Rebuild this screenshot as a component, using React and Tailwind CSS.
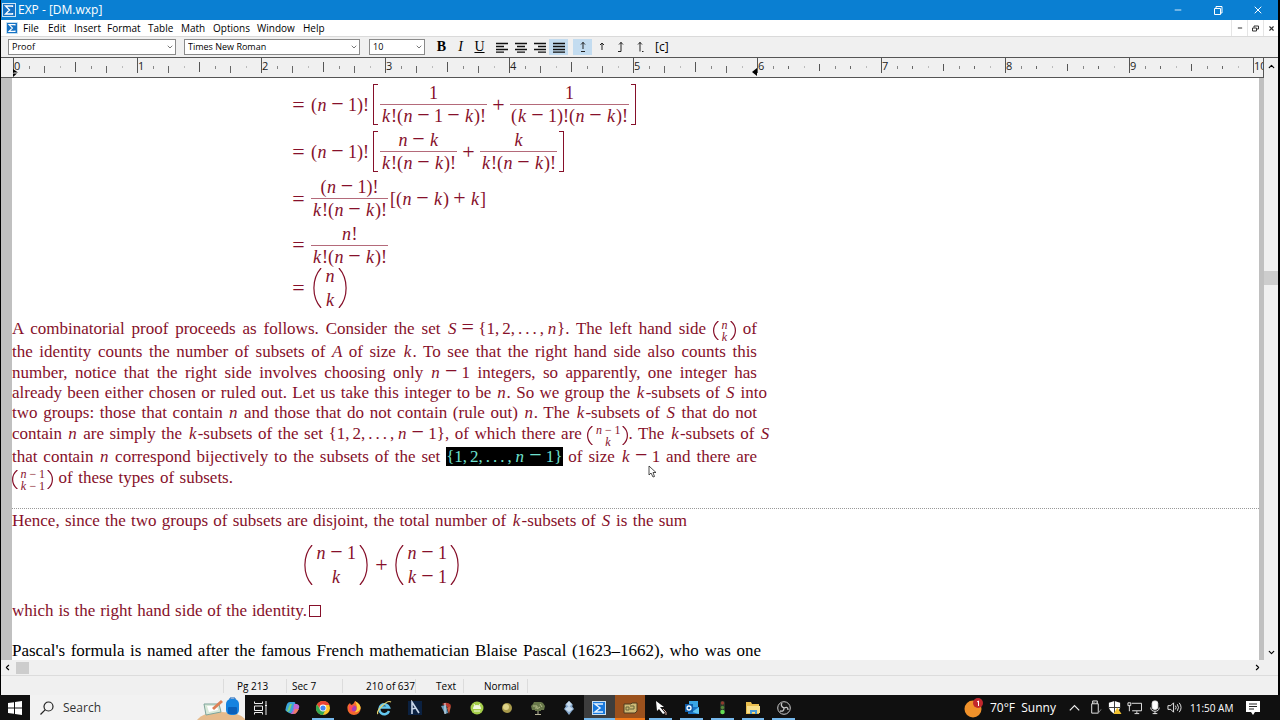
import React from 'react';
import { ChevronDown, ChevronLeft, ChevronRight, ChevronUp, Minus, X } from 'lucide-react';

const MENUS = [
  ['File', 'w-[25px]'],
  ['Edit', 'w-[26px]'],
  ['Insert', 'w-[33px]'],
  ['Format', 'w-[41px]'],
  ['Table', 'w-[33px]'],
  ['Math', 'w-[32px]'],
  ['Options', 'w-[44px]'],
  ['Window', 'w-[46px]'],
  ['Help', 'w-[30px]'],
];

const INCHES = [0, 1, 2, 3, 4, 5, 6, 7, 8, 9, 10];

const OPERATORS = { '-': '−', '+': '+', '=': '=' };

// Turns a short formula such as "(n-1)!" into spaced symbols
const Formula = ({ children, small }) => {
  const parts = children.match(/[a-zA-Z]|[-+=]|,|\.|[^a-zA-Z\-+=,.]+/g);
  return (
    <span className="inline-block whitespace-nowrap [text-align-last:center]">
      {parts.map((part, i) => {
        if (OPERATORS[part]) {
          return (
            <span
              key={i}
              className={small ? 'inline-block w-3 text-center' : 'mx-1 inline-block w-[13px] text-center text-[22px] leading-[10px]'}
            >
              {OPERATORS[part]}
            </span>
          );
        }
        if (/[a-zA-Z]/.test(part)) {
          return (
            <i key={i} className={small ? 'inline-block w-[7px] text-center' : 'inline-block w-[10px] text-center'}>
              {part}
            </i>
          );
        }
        if (part === ',' || part === '.') {
          return <span key={i} className="mr-[3px]">{part}</span>;
        }
        return <span key={i}>{part}</span>;
      })}
    </span>
  );
};

const Frac = ({ top, bottom }) => (
  <span className="inline-flex flex-col text-center leading-[22px]">
    <span><Formula>{top}</Formula></span>
    <span className="border-t border-[#b46a7a] px-px"><Formula>{bottom}</Formula></span>
  </span>
);

const Paren = ({ right, className }) => (
  <svg viewBox="0 0 10 40" preserveAspectRatio="none" className={className} fill="none" stroke="currentColor" aria-hidden="true">
    <path vectorEffect="non-scaling-stroke" strokeWidth="1.2" d={right ? 'M1 0Q9 8 9 20T1 40' : 'M9 0Q1 8 1 20T9 40'} />
  </svg>
);

const Binom = ({ top, bottom }) => (
  <span className="mx-[2px] inline-flex items-center">
    <Paren className="h-[40px] w-[9px]" />
    <span className="inline-flex flex-col px-[3px] text-center leading-[24px]">
      <Formula>{top}</Formula>
      <Formula>{bottom}</Formula>
    </span>
    <Paren right className="h-[40px] w-[9px]" />
  </span>
);

const SmallBinom = ({ top, bottom }) => (
  <span className="inline-flex h-[20px] items-center align-middle">
    <Paren className="h-[19px] w-[6px]" />
    <span className="inline-flex flex-col px-[2px] text-center text-[12px] leading-[12px]">
      <Formula small>{top}</Formula>
      <Formula small>{bottom}</Formula>
    </span>
    <Paren right className="h-[19px] w-[6px]" />
  </span>
);

const Bracketed = ({ children }) => (
  <span className="ml-1 inline-flex items-center">
    <span className="h-[41px] w-[5px] border-y border-l border-current" />
    <span className="inline-flex items-center px-[2px]">{children}</span>
    <span className="h-[41px] w-[5px] border-y border-r border-current" />
  </span>
);

const EqRow = ({ children, className = 'h-[47px]' }) => (
  <div className={`flex items-center ${className}`}>
    <span className="mr-[6px] w-[13px] text-center text-[22px] leading-[20px]">=</span>
    {children}
  </div>
);

const Plus = () => <span className="mx-[5px] w-[13px] text-center text-[22px] leading-[20px]">+</span>;

const Combo = ({ label, value, className }) => (
  <div className={`relative h-4 ${className}`}>
    <select
      aria-label={label}
      defaultValue={value}
      className="block h-4 w-full appearance-none border border-[#8a8a8a] bg-white pl-[3px] text-[9px] leading-[12px] text-black outline-none"
    >
      <option>{value}</option>
    </select>
    <ChevronDown className="pointer-events-none absolute right-[2px] top-[4px] h-2 w-2 text-[#333]" />
  </div>
);

const ToolButton = ({ label, active, children }) => (
  <button
    type="button"
    aria-label={label}
    className={`flex h-4 w-[19px] items-center justify-center ${active ? 'bg-[#c3dcf0]' : ''}`}
  >
    {children}
  </button>
);

const AlignIcon = ({ d }) => (
  <svg viewBox="0 0 12 11" className="h-[11px] w-3" stroke="#111" strokeWidth="1.3" aria-hidden="true">
    <path d={d} />
  </svg>
);

const ArrowIcon = ({ d }) => (
  <svg viewBox="0 0 8 12" className="h-3 w-2" fill="none" stroke="#222" strokeWidth="1" aria-hidden="true">
    <path d={d} />
  </svg>
);

const SigmaIcon = ({ className }) => (
  <svg viewBox="0 0 14 14" className={className} aria-hidden="true">
    <rect x="0.5" y="0.5" width="13" height="13" fill="#1672c4" stroke="#cfe6f5" />
    <path d="M10.5 4V3H3.5L7.5 7L3.5 11H10.5V10" fill="none" stroke="#fff" strokeWidth="1.3" />
  </svg>
);

const Ruler = () => (
  <div className="relative h-5 flex-1 overflow-hidden border-b border-r border-[#555] bg-[#f0f0f0] pl-3">
    <div className="flex">
      {INCHES.map((inch) => (
        <div key={inch} className="relative grid h-[18px] w-[124px] shrink-0 grid-cols-8 items-center">
          <span className="self-start border-l border-[#555] text-[11px] leading-[15px] text-[#222]">{inch}</span>
          <span className="h-[3px] border-l border-[#888]" />
          <span className={`${inch < 6 ? 'mt-1 h-[7px]' : 'h-[3px]'} border-l border-[#666]`} />
          <span className="h-[2px] border-l border-[#bbb]" />
          <span className={`${inch < 6 ? 'h-[10px]' : 'h-[7px]'} border-l border-[#555]`} />
          <span className="h-[3px] border-l border-[#888]" />
          <span className={`${inch < 6 ? 'mt-1 h-[7px]' : 'h-[3px]'} border-l border-[#666]`} />
          <span className="h-[2px] border-l border-[#bbb]" />
        </div>
      ))}
    </div>
    <svg viewBox="0 0 6 8" className="absolute left-3 top-[11px] h-2 w-[6px]" aria-hidden="true">
      <path d="M0 0L5 3.5H0ZM0 4.500H4L0 8Z" />
    </svg>
    <svg viewBox="0 0 5 8" className="absolute left-[751px] top-[10px] h-2 w-[5px]" aria-hidden="true">
      <path d="M5 0V8L0 4Z" />
    </svg>
  </div>
);

const Line = ({ className = 'h-[22px] w-[745px]', children }) => (
  <div className={`flex items-center whitespace-nowrap ${className}`}>
    <p className="w-full [text-align-last:justify]">{children}</p>
  </div>
);

const TaskIcon = ({ label, open, bg = '', children }) => (
  <button type="button" aria-label={label} className={`relative flex h-full items-center justify-center ${bg}`}>
    <svg viewBox="0 0 16 16" className="h-4 w-4" aria-hidden="true">{children}</svg>
    {open && <span className="absolute inset-x-1 bottom-0 h-[2px] bg-[#76b9ed]" />}
  </button>
);

const TrayIcon = ({ children, className = 'w-5' }) => (
  <span className={`flex justify-center ${className}`}>
    <svg viewBox="0 0 16 16" className="h-[15px] w-[15px]" fill="none" stroke="#eee" aria-hidden="true">{children}</svg>
  </span>
);

const Taskbar = () => (
  <footer className="flex h-[25px] shrink-0 items-center bg-[#101010] text-white">
    <button type="button" aria-label="Start" className="flex h-full w-[30px] items-center justify-center">
      <svg viewBox="0 0 14 14" className="h-[14px] w-[14px]" fill="#fff" aria-hidden="true">
        <path d="M0 2L6 1.200V6.500H0ZM7 1L14 0V6.500H7ZM0 7.500H6V12.800L0 12ZM7 7.500H14V14L7 13Z" />
      </svg>
    </button>
    <label className="flex h-full w-[215px] items-center bg-[#f2f2f2] pl-[10px]">
      <svg viewBox="0 0 14 14" className="h-[14px] w-[14px] shrink-0" fill="none" stroke="#222" strokeWidth="1.2" aria-hidden="true">
        <circle cx="8.500" cy="5.500" r="4.500" />
        <path d="M5.300 8.700L0.500 13.500" />
      </svg>
      <input
        aria-label="Search"
        placeholder="Search"
        className="ml-[9px] w-[120px] bg-transparent text-[12px] leading-[16px] outline-none placeholder:text-[#333]"
      />
      <svg viewBox="0 0 48 25" className="ml-auto h-[25px] w-[48px] shrink-0" aria-hidden="true">
        <path d="M0 25Q6 17 24 17T48 24V25Z" fill="#e6bb8c" />
        <path d="M7 9H22L24 17L9 20Z" fill="#d9e9d9" stroke="#7fa59b" />
        <path d="M10 11H20L21 15L12 17Z" fill="#fff" />
        <path d="M15 13L24 5L26 7L17 15Z" fill="#dd8055" />
        <path d="M33 5V3H38V5" fill="none" stroke="#1261b8" />
        <rect x="29" y="4" width="13" height="16" rx="5" fill="#1683e0" />
        <rect x="31" y="12" width="9" height="7" rx="1" fill="#0b60ba" />
      </svg>
    </label>
    <button type="button" aria-label="Task View" className="flex h-full w-[32px] items-center justify-center">
      <svg viewBox="0 0 16 14" className="h-[14px] w-4" fill="none" stroke="#eee" aria-hidden="true">
        <path d="M1.500 0.500V2.500H9.500V0.500M1.500 5H9.500V9.500H1.500ZM1.500 13.500V11.500H9.500V13.500M13 0V14M12 4.500H14" />
      </svg>
    </button>
    <nav aria-label="Apps" className="grid h-full w-[522px] grid-cols-[repeat(17,minmax(0,1fr))]">
      <TaskIcon label="Copilot">
        <path d="M6 2H10Q12 2 11 5L9 11Q8 14 5 13L2 11Q1 10 2 7L3 4Q4 2 6 2Z" fill="#3aa5dc" />
        <path d="M4 9L6 4H8L6 10Q5 12 3 12Z" fill="#7ccf78" />
        <path d="M10 4H13Q16 5 15 8L13 12Q12 14 9 14H6Q8 13 9 10Z" fill="#c069d0" />
        <path d="M11 9H15L13 12Q12 14 9 14Z" fill="#ee7d63" />
      </TaskIcon>
      <TaskIcon label="Chrome" open>
        <circle cx="8" cy="8" r="7" fill="#fbc52c" />
        <path d="M2 4.500A7 7 0 0 1 14.500 5H8L5 9Z" fill="#e84335" />
        <path d="M1.900 4.500A7 7 0 0 0 8 15L10.500 9.500L5 9Z" fill="#34a853" />
        <circle cx="8" cy="8" r="3.400" fill="#fff" />
        <circle cx="8" cy="8" r="2.600" fill="#4285f4" />
      </TaskIcon>
      <TaskIcon label="Firefox">
        <path d="M2 5L4 3L5 5Q8 4 9 1Q15 4 14.500 9A6.500 6 0 0 1 1.500 9Q1 7 2 5Z" fill="#f46a2c" />
        <path d="M9 1Q15 4 14.500 9Q12 13 9 12Q13 8 9 1Z" fill="#ffce3c" />
        <circle cx="7.500" cy="8.500" r="3" fill="#a63fb5" />
        <path d="M3 5L8 6L6 8Q5 11 9 12Q4 13 3 9Z" fill="#ff4b54" />
      </TaskIcon>
      <TaskIcon label="Internet Explorer">
        <path d="M13 11A5 5 0 1 1 13 7.500H4" fill="none" stroke="#63c7ef" strokeWidth="2.500" />
        <path d="M2 14Q0 12 6 6T15 2" fill="none" stroke="#e9d46b" strokeWidth="1.200" />
      </TaskIcon>
      <TaskIcon label="Aleks">
        <rect x="1" y="1" width="14" height="14" fill="#0b2141" />
        <path d="M5 14V2L12 13M5 9L9 8" fill="none" stroke="#c9d6e8" strokeWidth="1.600" />
      </TaskIcon>
      <TaskIcon label="Snagit">
        <path d="M4 4Q9 1 13 5L11 9L8 6Z" fill="#b8392e" />
        <path d="M3 6L8 5L10 13L7 14Z" fill="#6c9cba" />
        <path d="M9 8L13 6L11 14Z" fill="#c9583c" />
        <path d="M7 3V14" stroke="#d8e4ec" />
      </TaskIcon>
      <TaskIcon label="Android">
        <circle cx="8" cy="8" r="6.500" fill="#a5ce4a" />
        <path d="M4 9A4 4 0 0 1 12 9Z" fill="#f2f8df" />
        <path d="M5 4L6 6M11 4L10 6M5 11H11" stroke="#f2f8df" />
      </TaskIcon>
      <TaskIcon label="Sphere">
        <circle cx="8" cy="8" r="5" fill="#a89a4b" />
        <circle cx="7" cy="7" r="3" fill="#ded389" />
      </TaskIcon>
      <TaskIcon label="Tree">
        <path d="M4 2H11L13 3L15 6L14 10H11V11H5V10H2L1 6L3 4Z" fill="#68784a" />
        <path d="M3 6H7V8H5M10 4L12 7M7 9L10 7" stroke="#b6bd8b" fill="none" />
        <path d="M8 11V14M5 14.500H11" stroke="#b8b69a" />
      </TaskIcon>
      <TaskIcon label="Stack">
        <path d="M8 1L11 4L12 5L11 6L13 9L11 11L8 15L5 11L3 9L5 6L4 5L5 4Z" fill="#88aace" />
        <path d="M8 1L11 4L8 7L5 4ZM8 6L12 9L8 12L4 9Z" fill="#c6dbed" />
      </TaskIcon>
      <TaskIcon label="EXP" open bg="bg-[#3d3d3d] [&>span]:inset-x-0">
        <rect x="1.500" y="1.500" width="13" height="13" fill="#1878dc" stroke="#c9dff0" />
        <path d="M12 4H4L9 8L4 12H12" fill="none" stroke="#e4f2ff" strokeWidth="1.500" />
      </TaskIcon>
      <TaskIcon label="Batch" open bg="bg-[#9b511d] [&>span]:inset-x-0 [&>span]:bg-[#f07818]">
        <path d="M2 4H9L10 3H15V11L13 13H2Z" fill="#cfba76" stroke="#4e3c20" />
        <path d="M4 7H7V10H4ZM8 6H12V9H8" fill="none" stroke="#66643a" />
      </TaskIcon>
      <TaskIcon label="Pointer" open>
        <path d="M3 1L11 7L7 7L12 13L10 14L6 9L4 11Z" fill="#fff" />
        <path d="M10 9L13 12L13 15" stroke="#d4a9a1" fill="none" />
      </TaskIcon>
      <TaskIcon label="Outlook" open>
        <path d="M5 1H14V8H5Z" fill="#39a5e3" />
        <path d="M4 7H15V14H4Z" fill="#1872c2" />
        <path d="M15 7L8 12L15 14Z" fill="#5fc5f2" />
        <rect x="1" y="4" width="8" height="8" fill="#0f5da8" />
        <circle cx="5" cy="8" r="2" fill="none" stroke="#fff" strokeWidth="1.300" />
      </TaskIcon>
      <TaskIcon label="Traffic" open>
        <rect x="6" y="1" width="5" height="13" rx="2" fill="#283528" />
        <circle cx="8.500" cy="3" r="1.700" fill="#8e3a2e" />
        <circle cx="8.500" cy="7.500" r="1.700" fill="#568538" />
        <circle cx="8.500" cy="12" r="2.200" fill="#65dc52" />
      </TaskIcon>
      <TaskIcon label="File Explorer" open>
        <path d="M1 2H6L7 4H14V14H1Z" fill="#e9bd4e" />
        <path d="M2 6H15V13H2Z" fill="#f8df8a" />
        <path d="M5 14V10H12V14H10V12H7V14Z" fill="#4c9cd5" />
      </TaskIcon>
      <TaskIcon label="OBS Studio" open>
        <circle cx="8" cy="8" r="6.300" fill="#191919" stroke="#c9c9c9" />
        <path d="M8 8Q4 6 6 3M8 8Q12 6 12 10M8 8Q8 12 4 11" fill="none" stroke="#c9c9c9" strokeWidth="1.300" />
      </TaskIcon>
    </nav>
    <div className="ml-auto flex h-full items-center">
      <svg viewBox="0 0 20 20" className="h-5 w-5" aria-hidden="true">
        <circle cx="9" cy="11" r="8.500" fill="#f0912a" />
        <circle cx="14" cy="5" r="5" fill="#c1272d" />
        <path d="M13 4L14.500 3V8" fill="none" stroke="#fff" />
      </svg>
      <span className="ml-[6px] w-[74px] whitespace-pre text-[12px] leading-[16px]">70°F  Sunny</span>
      <TrayIcon>
        <path d="M3 11L8 6L13 11" strokeWidth="1.300" />
      </TrayIcon>
      <TrayIcon>
        <path d="M6 4V1H11V4M5 4H12V14H5ZM7 2.500H8M9.500 2.500H10" />
        <path d="M12 14L15 10" stroke="#888" />
      </TrayIcon>
      <TrayIcon>
        <path d="M8 1L14 3V8Q13 12 8 15Q3 12 2 8V3Z" fill="#fff" stroke="none" />
        <path d="M8 1V14M2 8H14" stroke="#333" />
        <path d="M11 8L15.500 15H7Z" fill="#f2c230" stroke="none" />
      </TrayIcon>
      <TrayIcon>
        <path d="M5 3.500H15.500V11.500H5.500M1 3H4V6H1ZM2.500 6V12M8 14.500H13M10.500 12V14" />
      </TrayIcon>
      <TrayIcon>
        <rect x="5.500" y="1" width="6" height="9" rx="2.500" fill="#fff" />
        <path d="M4 8Q4 12 8.500 12T13 8M8.500 12V15M6 14.500H11" />
      </TrayIcon>
      <TrayIcon>
        <path d="M1 6H4L7 3V13L4 10H1ZM9 6Q10.500 8 9 10M11 4.500Q13.500 8 11 11.500M13 3Q17 8 13 13" />
      </TrayIcon>
      <time className="ml-[6px] w-[56px] text-[10px] leading-[14px]">11:50 AM</time>
      <button type="button" aria-label="Notifications" className="mr-[20px]">
        <svg viewBox="0 0 14 14" className="h-[14px] w-[14px]" aria-hidden="true">
          <path d="M0 0H14V11H9L7 14L5 11H0Z" fill="#fff" />
          <path d="M3 3H11M3 5.500H11M3 8H8" stroke="#222" />
        </svg>
      </button>
    </div>
  </footer>
);

const App = () => {
  return (
    <div className="flex h-screen flex-col overflow-hidden bg-black font-['Open_Sans','Noto_Sans',sans-serif] text-black">
      <div className="ml-px mr-[2px] flex min-h-0 flex-1 flex-col bg-[#f0f0f0]">
        <header className="flex h-5 shrink-0 items-center bg-[#0a7fd2] text-white">
          <SigmaIcon className="ml-px h-[14px] w-[14px]" />
          <h1 className="ml-[2px] text-[12px] leading-[16px]">EXP - [DM.wxp]</h1>
          <div className="ml-auto flex items-center">
            <button type="button" aria-label="Minimize" className="flex w-10 justify-center"><Minus className="h-[10px] w-[10px]" /></button>
            <button type="button" aria-label="Restore" className="flex w-10 justify-center">
              <svg viewBox="0 0 10 10" className="h-[10px] w-[10px]" fill="none" stroke="#fff" aria-hidden="true">
                <path d="M1.500 3.500H7.500V9.500H1.500ZM3 3V1.500H9V8H8" />
              </svg>
            </button>
            <button type="button" aria-label="Close" className="flex w-10 justify-center"><X className="h-3 w-3" /></button>
          </div>
        </header>

        <nav aria-label="Menu" className="flex h-4 shrink-0 items-center bg-white text-[10px] leading-[14px]">
          <SigmaIcon className="mx-[5px] h-3 w-3" />
          {MENUS.map(([label, width]) => (
            <button key={label} type="button" className={`text-left whitespace-nowrap ${width}`}>{label}</button>
          ))}
          <div className="ml-auto flex items-center text-[#333]">
            <button type="button" aria-label="Minimize document" className="flex h-4 w-4 items-center justify-center border-l border-[#e5e5e5]"><Minus className="h-[6px] w-[6px]" strokeWidth={4} /></button>
            <button type="button" aria-label="Restore document" className="flex h-4 w-4 items-center justify-center border-l border-[#e5e5e5]">
              <svg viewBox="0 0 7 7" className="h-[7px] w-[7px]" fill="none" stroke="#333" aria-hidden="true"><path d="M0.500 3H4.500V6H0.500ZM2 2.500V1H6.500V4H5" /></svg>
            </button>
            <button type="button" aria-label="Close document" className="flex h-4 w-[15px] items-center justify-center border-l border-[#e5e5e5]"><X className="h-[7px] w-[7px]" strokeWidth={4} /></button>
          </div>
        </nav>

        <div className="flex h-[21px] shrink-0 items-center border-t border-[#dadada] pl-[7px]">
          <Combo label="Paragraph style" value="Proof" className="mr-2 w-[168px]" />
          <Combo label="Font" value="Times New Roman" className="mr-[9px] w-[176px]" />
          <Combo label="Font size" value="10" className="w-[56px]" />
          <div className="ml-[7px] flex font-['Liberation_Serif',serif] text-[14px] leading-[16px]">
            <ToolButton label="Bold"><b>B</b></ToolButton>
            <ToolButton label="Italic"><i>I</i></ToolButton>
            <ToolButton label="Underline"><u>U</u></ToolButton>
          </div>
          <div className="ml-[3px] flex">
            <ToolButton label="Align left"><AlignIcon d="M0 1.500H12M0 4.500H8M0 7.500H12M0 10.200H8" /></ToolButton>
            <ToolButton label="Align center"><AlignIcon d="M0 1.500H12M2 4.500H10M0 7.500H12M2 10.200H10" /></ToolButton>
            <ToolButton label="Align right"><AlignIcon d="M0 1.500H12M4 4.500H12M0 7.500H12M4 10.200H12" /></ToolButton>
            <ToolButton label="Justify" active><AlignIcon d="M0 1.500H12M0 4.500H12M0 7.500H12M0 10.200H12" /></ToolButton>
          </div>
          <div className="ml-[5px] flex">
            <ToolButton label="Tab center" active><ArrowIcon d="M4 1V8M2 3.500L4 1.500L6 3.500M2 10.500H6" /></ToolButton>
            <ToolButton label="Tab left"><ArrowIcon d="M4 2V9M2 4L4 2L6 4" /></ToolButton>
            <ToolButton label="Tab right"><ArrowIcon d="M4 1V10.500M2 3.500L4 1.500L6 3.500M1 10.500H4" /></ToolButton>
            <ToolButton label="Tab decimal"><ArrowIcon d="M4 1V10.500M2 3.500L4 1.500L6 3.500M6 10.500H7.500" /></ToolButton>
          </div>
          <button type="button" className="ml-[6px] text-[12px] leading-[14px]">[c]</button>
        </div>

        <div className="flex min-h-0 flex-1 border-t border-[#555]">
          <div className="flex min-w-0 flex-1 flex-col">
            <div className="flex shrink-0"><Ruler /></div>
            <main className="relative min-h-0 flex-1 overflow-hidden border-l-[11px] border-r-[5px] border-[#c0c0c0] bg-white font-['Liberation_Serif','Times_New_Roman',serif] text-[17px] leading-[20px] text-[#86102a]">
              <div className="ml-[280px] pt-[3px] text-[18px]">
                <EqRow>
                  <Formula>(n-1)!</Formula>
                  <Bracketed>
                    <Frac top="1" bottom="k!(n-1-k)!" />
                    <Plus />
                    <Frac top="1" bottom="(k-1)!(n-k)!" />
                  </Bracketed>
                </EqRow>
                <EqRow>
                  <Formula>(n-1)!</Formula>
                  <Bracketed>
                    <Frac top="n-k" bottom="k!(n-k)!" />
                    <Plus />
                    <Frac top="k" bottom="k!(n-k)!" />
                  </Bracketed>
                </EqRow>
                <EqRow>
                  <Frac top="(n-1)!" bottom="k!(n-k)!" />
                  <span className="ml-[2px]"><Formula>[(n-k)+k]</Formula></span>
                </EqRow>
                <EqRow className="h-[46px]">
                  <Frac top="n!" bottom="k!(n-k)!" />
                </EqRow>
                <EqRow className="h-[40px]">
                  <Binom top="n" bottom="k" />
                </EqRow>
              </div>

              <div className="pt-[11px]">
                <Line>
                  A combinatorial proof proceeds as follows. Consider the set <Formula>{'S={1,2,...,n}'}</Formula>. The left hand side <SmallBinom top="n" bottom="k" /> of
                </Line>
                <Line>
                  the identity counts the number of subsets of <Formula>A</Formula> of size <Formula>k</Formula>. To see that the right hand side also counts this
                </Line>
                <Line className="h-[20px] w-[745px]">
                  number, notice that the right side involves choosing only <Formula>n-1</Formula> integers, so apparently, one integer has
                </Line>
                <Line className="h-[20px] w-[755px]">
                  already been either chosen or ruled out. Let us take this integer to be <Formula>n</Formula>. So we group the <Formula>k</Formula>-subsets of <Formula>S</Formula> into
                </Line>
                <Line className="h-[20px] w-[745px]">
                  two groups: those that contain <Formula>n</Formula> and those that do not contain (rule out) <Formula>n</Formula>. The <Formula>k</Formula>-subsets of <Formula>S</Formula> that do not
                </Line>
                <Line className="h-[24px] w-[758px]">
                  contain <Formula>n</Formula> are simply the <Formula>k</Formula>-subsets of the set <Formula>{'{1,2,...,n-1}'}</Formula>, of which there are <SmallBinom top="n-1" bottom="k" />. The <Formula>k</Formula>-subsets of <Formula>S</Formula>
                </Line>
                <Line className="h-[20px] w-[745px]">
                  that contain <Formula>n</Formula> correspond bijectively to the subsets of the set{' '}
                  <mark className="bg-black text-[#6fe0cf]"><Formula>{'{1,2,...,n-1}'}</Formula></mark> of size <Formula>k-1</Formula> and there are
                </Line>
                <Line className="h-[24px] w-[221px]">
                  <SmallBinom top="n-1" bottom="k-1" /> of these types of subsets.
                </Line>
              </div>

              <div className="mt-[17px] border-t border-dotted border-[#999] pt-px">
                <Line className="h-[21px] w-[675px]">
                  Hence, since the two groups of subsets are disjoint, the total number of <Formula>k</Formula>-subsets of <Formula>S</Formula> is the sum
                </Line>
              </div>
              <div className="ml-[290px] mt-[10px] flex items-center text-[18px]">
                <Binom top="n-1" bottom="k" />
                <Plus />
                <Binom top="n-1" bottom="k-1" />
              </div>
              <div className="mt-[12px] flex items-center">
                <Line className="h-[20px] w-[295px]">which is the right hand side of the identity.</Line>
                <span className="ml-[2px] h-3 w-3 border border-current" />
              </div>
              <div className="mt-5 text-black">
                <Line className="h-[20px] w-[749px]">
                  Pascal's formula is named after the famous French mathematician Blaise Pascal (1623–1662), who was one
                </Line>
              </div>

              <svg viewBox="0 0 9 13" className="absolute left-[636px] top-[387px] h-[13px] w-[9px]" aria-hidden="true">
                <path d="M1 1V10L3 8L5 12L6.500 11.500L5 7.500H8Z" fill="#fff" stroke="#222" strokeWidth="0.800" />
              </svg>
            </main>
          </div>

          <div className="flex w-[14px] shrink-0 flex-col items-center">
            <button type="button" aria-label="Scroll up" className="mt-1"><ChevronUp className="h-[9px] w-[9px]" strokeWidth={3} /></button>
            <div className="mt-[200px] h-[14px] w-full bg-[#cdcdcd]" />
            <button type="button" aria-label="Scroll down" className="mb-[3px] mt-auto"><ChevronDown className="h-[9px] w-[9px]" strokeWidth={3} /></button>
          </div>
        </div>

        <div className="flex h-[15px] shrink-0 items-center pr-[16px]">
          <button type="button" aria-label="Scroll left" className="w-[15px] pl-[2px]"><ChevronLeft className="h-[9px] w-[9px]" strokeWidth={3} /></button>
          <div className="h-3 w-[13px] bg-[#cdcdcd]" />
          <button type="button" aria-label="Scroll right" className="ml-auto"><ChevronRight className="h-[9px] w-[9px]" strokeWidth={3} /></button>
        </div>

        <div className="flex h-5 shrink-0 items-center border-t border-[#dcdcdc] pl-[222px] text-[10px] leading-[14px]">
          <span className="w-[63px] border-l border-[#dcdcdc] pl-[13px]">Pg 213</span>
          <span className="w-[56px] border-l border-[#dcdcdc] pl-[5px]">Sec 7</span>
          <span className="w-[74px] border-x border-[#dcdcdc] text-right">210 of 637</span>
          <span className="w-[48px] border-r border-[#dcdcdc] pr-[7px] text-right">Text</span>
          <span className="w-[64px] border-r border-[#dcdcdc] pr-[8px] text-right">Normal</span>
        </div>
      </div>
      <Taskbar />
    </div>
  );
};

export default App;
